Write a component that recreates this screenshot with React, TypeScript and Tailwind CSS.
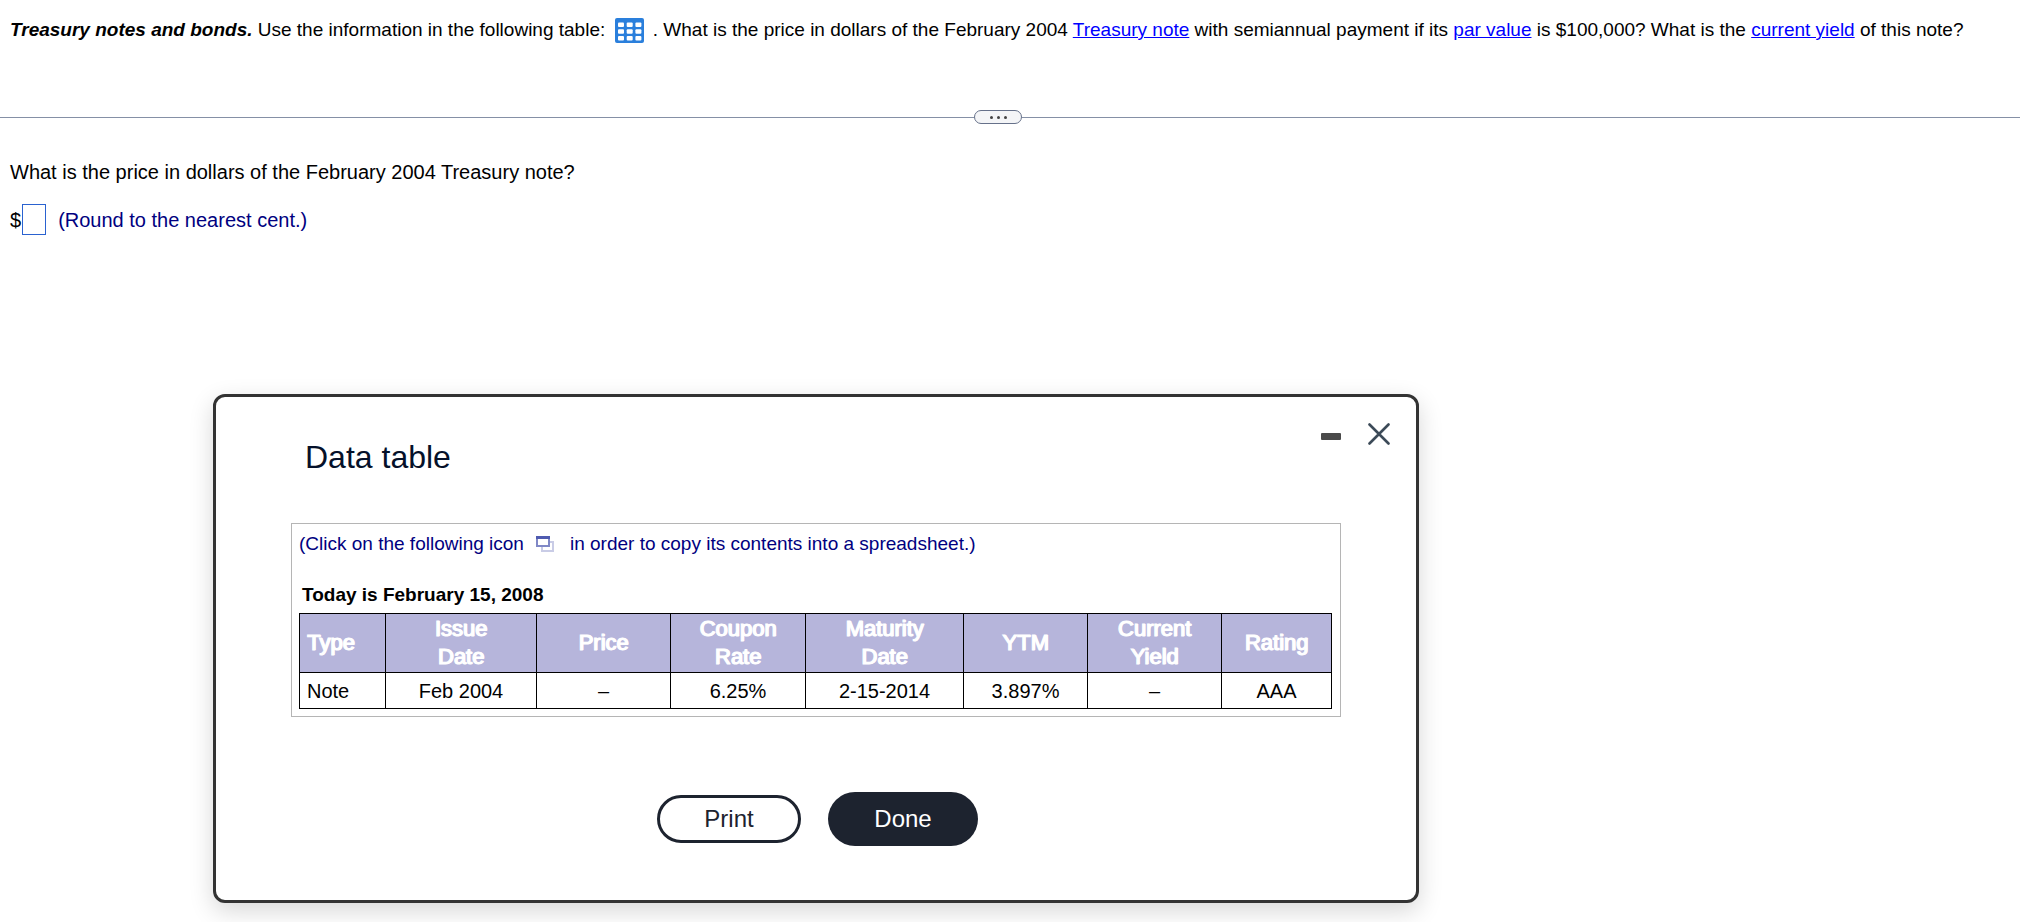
import React from "react";

interface Bond {
  type: string;
  issueDate: string;
  price: string;
  couponRate: string;
  maturityDate: string;
  ytm: string;
  currentYield: string;
  rating: string;
}

const columns: { key: keyof Bond; lines: string[]; width: string }[] = [
  { key: "type", lines: ["Type"], width: "w-[86px]" },
  { key: "issueDate", lines: ["Issue", "Date"], width: "w-[151px]" },
  { key: "price", lines: ["Price"], width: "w-[134px]" },
  { key: "couponRate", lines: ["Coupon", "Rate"], width: "w-[135px]" },
  { key: "maturityDate", lines: ["Maturity", "Date"], width: "w-[158px]" },
  { key: "ytm", lines: ["YTM"], width: "w-[124px]" },
  { key: "currentYield", lines: ["Current", "Yield"], width: "w-[134px]" },
  { key: "rating", lines: ["Rating"], width: "w-[110px]" },
];

const bonds: Bond[] = [
  {
    type: "Note",
    issueDate: "Feb 2004",
    price: "–",
    couponRate: "6.25%",
    maturityDate: "2-15-2014",
    ytm: "3.897%",
    currentYield: "–",
    rating: "AAA",
  },
];

function TableIcon() {
  return (
    <svg width="29" height="25" viewBox="0 0 29 25" aria-hidden="true">
      <rect width="29" height="25" rx="2" fill="#2a7fdc" />
      {[4.5, 11.3, 18].map((y) =>
        [3, 11.7, 20.4].map((x) => (
          <rect key={`${x}-${y}`} x={x} y={y} width="6" height="4.4" rx="1" fill="#fff" />
        ))
      )}
    </svg>
  );
}

function CopyIcon() {
  return (
    <svg width="18" height="16" viewBox="0 0 18 16" aria-hidden="true">
      <rect x="6" y="6" width="11" height="9" fill="#fff" stroke="#c9cce6" strokeWidth="2" />
      <rect x="1" y="1" width="12" height="9" fill="#fff" stroke="#8088c6" strokeWidth="2" />
      <rect x="0" y="0" width="14" height="3" fill="#4f5bb0" />
    </svg>
  );
}

function TermLink({ children }: { children: React.ReactNode }) {
  return (
    <a href="#" className="text-[#0000ff] underline">
      {children}
    </a>
  );
}

function DataTable() {
  return (
    <table className="w-full border-collapse text-center">
      <caption className="px-[3px] pb-1 text-left text-[19px] leading-7 font-bold">
        Today is February 15, 2008
      </caption>
      <thead>
        <tr className="bg-[#b6b5db] text-[22px] leading-7 text-white">
          {columns.map((col) => (
            <th
              key={col.key}
              scope="col"
              className={`h-[59px] border border-black px-[7px] font-normal [-webkit-text-stroke:1px_white] [text-shadow:1px_0_0_white] first:text-left ${col.width}`}
            >
              {col.lines.map((line) => (
                <span key={line} className="block">
                  {line}
                </span>
              ))}
            </th>
          ))}
        </tr>
      </thead>
      <tbody>
        {bonds.map((bond) => (
          <tr key={bond.maturityDate}>
            {columns.map((col) => (
              <td key={col.key} className="h-9 border border-black px-[7px] first:text-left">
                {bond[col.key]}
              </td>
            ))}
          </tr>
        ))}
      </tbody>
    </table>
  );
}

function DataTableDialog() {
  return (
    <div
      role="dialog"
      aria-labelledby="dialog-title"
      className="absolute top-[394px] left-[213px] w-[1206px] rounded-xl border-[3px] border-[#333333] bg-white px-[75px] pb-[54px] shadow-[0_8px_24px_rgba(0,0,0,0.16)]"
    >
      <div className="flex items-start justify-between">
        <h2 id="dialog-title" className="px-[14px] pt-10 text-[32px] leading-10 text-[#05112a]">
          Data table
        </h2>
        <div className="-mr-[52px] flex items-center gap-[22px] pt-[23px]">
          <button type="button" aria-label="Minimize" className="flex h-7 w-6 items-center justify-center">
            <span className="mt-1 h-[7px] w-5 rounded-[1px] bg-[#4a4a4a]" />
          </button>
          <button type="button" aria-label="Close" className="flex size-7 items-center justify-center">
            <svg width="22" height="22" viewBox="0 0 22 22" aria-hidden="true">
              <path d="M1.5 1.5 20.5 20.5M20.5 1.5 1.5 20.5" stroke="#3c4a58" strokeWidth="2.6" strokeLinecap="round" />
            </svg>
          </button>
        </div>
      </div>

      <div className="mt-[46px] border border-[#b5b5b5] py-[7px] pr-2 pl-[7px]">
        <p className="mb-6 flex items-center text-[19px] leading-[26px] text-[#000080]">
          (Click on the following icon
          <button type="button" aria-label="Copy to spreadsheet" className="mr-4 ml-3">
            <CopyIcon />
          </button>
          in order to copy its contents into a spreadsheet.)
        </p>
        <DataTable />
      </div>

      <div className="mt-[75px] flex items-center justify-center gap-[27px] pl-[3px] text-2xl">
        <button type="button" className="h-12 w-36 rounded-full border-[3px] border-[#1d232f] text-[#1d232f]">
          Print
        </button>
        <button type="button" className="h-[54px] w-[150px] rounded-full bg-[#1d232f] text-white">
          Done
        </button>
      </div>
    </div>
  );
}

export default function App() {
  return (
    <main className="relative min-h-screen bg-white font-['Liberation_Sans',Arial,sans-serif] text-[20px] leading-7 text-black">
      <p className="px-[10px] pt-4 text-[19px] leading-7">
        <b>
          <i>Treasury notes and bonds.</i>
        </b>{" "}
        Use the information in the following table:{" "}
        <button type="button" aria-label="Open data table" className="mx-1 inline-block h-[25px] align-middle">
          <TableIcon />
        </button>{" "}
        . What is the price in dollars of the February 2004 <TermLink>Treasury note</TermLink> with semiannual
        payment if its <TermLink>par value</TermLink> is $100,000? What is the <TermLink>current yield</TermLink> of
        this note?
      </p>

      {/* Divider with the resize handle, which sits a little left of centre */}
      <div className="mt-[66px] flex items-center">
        <span className="h-px flex-1 bg-[#8590a6]" />
        <button
          type="button"
          aria-label="Resize panels"
          className="flex h-[14px] w-12 items-center justify-center gap-1 rounded-full border border-[#66718a] bg-[#f4f5f7]"
        >
          <span className="size-[3px] rounded-full bg-[#444]" />
          <span className="size-[3px] rounded-full bg-[#444]" />
          <span className="size-[3px] rounded-full bg-[#444]" />
        </button>
        <span className="h-px flex-1 bg-[#8590a6]" />
        <span className="h-px w-6 bg-[#8590a6]" />
      </div>

      <div className="px-[10px] pt-[34px]">
        <p>What is the price in dollars of the February 2004 Treasury note?</p>
        <div className="mt-[18px] flex items-center">
          <label htmlFor="price">$</label>
          <input id="price" type="text" className="mr-3 ml-px h-[31px] w-6 border border-[#2a62d0]" />
          <span className="text-[#000080]">(Round to the nearest cent.)</span>
        </div>
      </div>

      <DataTableDialog />
    </main>
  );
}
